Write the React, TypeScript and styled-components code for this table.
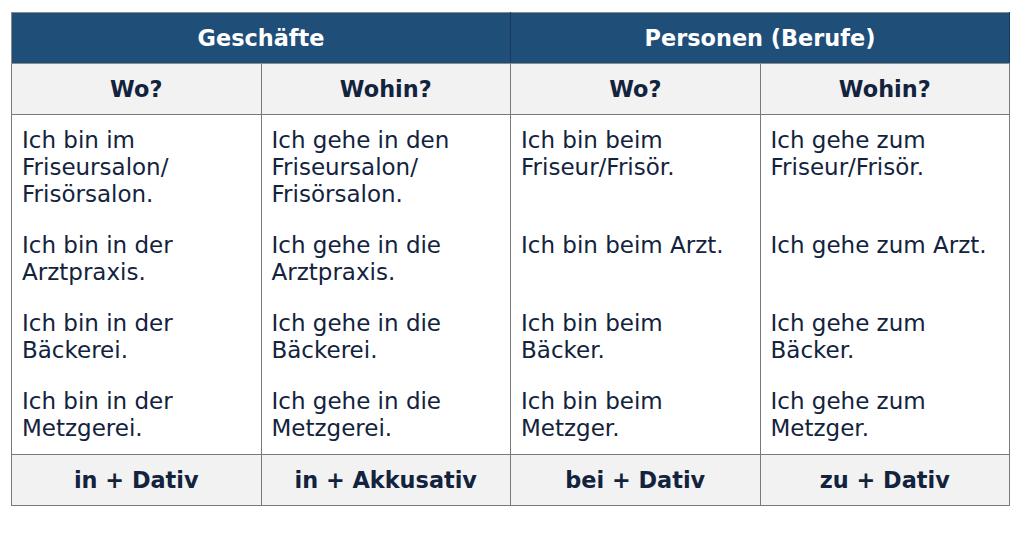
import React from "react";
import styled, { createGlobalStyle } from "styled-components";

const Global = createGlobalStyle`
  html, body { margin: 0; padding: 0; background: #ffffff; }
  body { font-family: "DejaVu Sans", Verdana, sans-serif; }
`;

const Page = styled.div`
  padding: 12px 0 0 11px;
`;

const Table = styled.table`
  border-collapse: collapse;
  table-layout: fixed;
  width: 998px;
  border: 1px solid #8a8a8a;
`;

const Col = styled.col`
  width: 249.5px;
`;

const HeadCell = styled.th`
  background: #1f4e79;
  color: #ffffff;
  font-size: 22.4px;
  font-weight: bold;
  height: 50px;
  padding: 0;
  text-align: center;
  border-right: 1px solid #17395a;
  border-bottom: 1px solid #8a8a8a;
`;

const SubCell = styled.th`
  background: #f2f2f2;
  color: #13233d;
  font-size: 22.4px;
  font-weight: bold;
  height: 50px;
  padding: 0;
  text-align: center;
  border: 1px solid #7a7a7a;
`;

const BodyCell = styled.td<{ $last?: boolean; $first?: boolean }>`
  color: #13233d;
  font-size: 23px;
  line-height: 27px;
  vertical-align: top;
  padding: ${(p) => (p.$first ? "12px" : "0")} 10px ${(p) => (p.$last ? "12px" : "24px")} 10px;
  border-left: 1px solid #7a7a7a;
  border-right: 1px solid #7a7a7a;
`;

const FootCell = styled.td`
  background: #f2f2f2;
  color: #13233d;
  font-size: 22.4px;
  font-weight: bold;
  height: 50px;
  padding: 0;
  text-align: center;
  border: 1px solid #7a7a7a;
`;

const rows: string[][] = [
  [
    "Ich bin im Friseursalon/ Frisörsalon.",
    "Ich gehe in den Friseursalon/ Frisörsalon.",
    "Ich bin beim Friseur/Frisör.",
    "Ich gehe zum Friseur/Frisör.",
  ],
  [
    "Ich bin in der Arztpraxis.",
    "Ich gehe in die Arztpraxis.",
    "Ich bin beim Arzt.",
    "Ich gehe zum Arzt.",
  ],
  [
    "Ich bin in der Bäckerei.",
    "Ich gehe in die Bäckerei.",
    "Ich bin beim Bäcker.",
    "Ich gehe zum Bäcker.",
  ],
  [
    "Ich bin in der Metzgerei.",
    "Ich gehe in die Metzgerei.",
    "Ich bin beim Metzger.",
    "Ich gehe zum Metzger.",
  ],
];

export default function App() {
  return (
    <Page>
      <Global />
      <Table>
        <colgroup>
          <Col />
          <Col />
          <Col />
          <Col />
        </colgroup>
        <thead>
          <tr>
            <HeadCell colSpan={2}>Geschäfte</HeadCell>
            <HeadCell colSpan={2}>Personen (Berufe)</HeadCell>
          </tr>
          <tr>
            <SubCell>Wo?</SubCell>
            <SubCell>Wohin?</SubCell>
            <SubCell>Wo?</SubCell>
            <SubCell>Wohin?</SubCell>
          </tr>
        </thead>
        <tbody>
          {rows.map((r, i) => (
            <tr key={i}>
              {r.map((c, j) => (
                <BodyCell key={j} $first={i === 0} $last={i === rows.length - 1}>
                  {c}
                </BodyCell>
              ))}
            </tr>
          ))}
          <tr>
            <FootCell>in + Dativ</FootCell>
            <FootCell>in + Akkusativ</FootCell>
            <FootCell>bei + Dativ</FootCell>
            <FootCell>zu + Dativ</FootCell>
          </tr>
        </tbody>
      </Table>
    </Page>
  );
}
